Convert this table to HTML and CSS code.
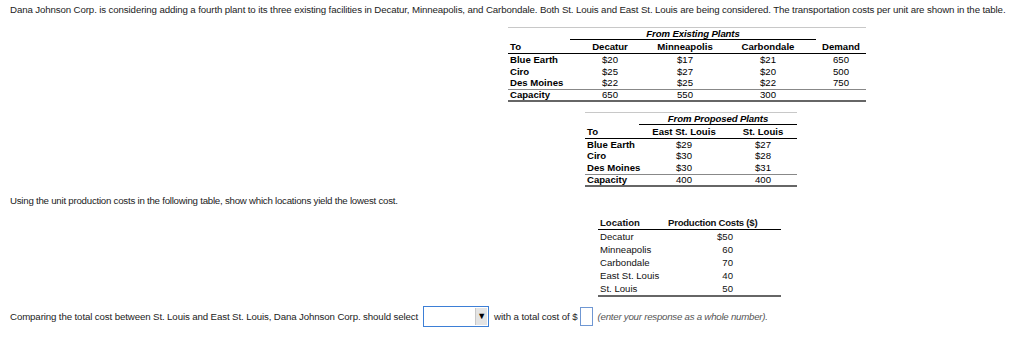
FILE: index.html
```html
<!DOCTYPE html>
<html>
<head>
<meta charset="utf-8">
<link rel="stylesheet" href="styles.css">
</head>
<body>
<p class="intro">Dana Johnson Corp. is considering adding a fourth plant to its three existing facilities in Decatur, Minneapolis, and Carbondale. Both St. Louis and East St. Louis are being considered. The transportation costs per unit are shown in the table.</p>

<table class="tbl t1">
  <colgroup><col class="c1a"><col class="c1b"><col class="c1c"><col class="c1d"><col class="c1e"></colgroup>
  <tr class="title"><td></td><td colspan="3" class="ul">From Existing Plants</td><td></td></tr>
  <tr class="head"><td class="lbl">To</td><td>Decatur</td><td>Minneapolis</td><td>Carbondale</td><td>Demand</td></tr>
  <tr class="data"><td class="lbl">Blue Earth</td><td>$20</td><td>$17</td><td>$21</td><td>650</td></tr>
  <tr class="data"><td class="lbl">Ciro</td><td>$25</td><td>$27</td><td>$20</td><td>500</td></tr>
  <tr class="data"><td class="lbl">Des Moines</td><td>$22</td><td>$25</td><td>$22</td><td>750</td></tr>
  <tr class="cap"><td class="lbl">Capacity</td><td>650</td><td>550</td><td>300</td><td></td></tr>
</table>

<table class="tbl t2">
  <colgroup><col class="c2a"><col class="c2b"><col class="c2c"></colgroup>
  <tr class="title"><td></td><td colspan="2" class="ul">From Proposed Plants</td></tr>
  <tr class="head"><td class="lbl">To</td><td>East St. Louis</td><td>St. Louis</td></tr>
  <tr class="data"><td class="lbl">Blue Earth</td><td>$29</td><td>$27</td></tr>
  <tr class="data"><td class="lbl">Ciro</td><td>$30</td><td>$28</td></tr>
  <tr class="data"><td class="lbl">Des Moines</td><td>$30</td><td>$31</td></tr>
  <tr class="cap"><td class="lbl">Capacity</td><td>400</td><td>400</td></tr>
</table>

<p class="using">Using the unit production costs in the following table, show which locations yield the lowest cost.</p>

<table class="t3">
  <colgroup><col class="c3a"><col class="c3b"></colgroup>
  <tr class="head3"><td>Location</td><td class="pc">Production Costs ($)</td></tr>
  <tr><td>Decatur</td><td class="num">$50</td></tr>
  <tr><td>Minneapolis</td><td class="num">60</td></tr>
  <tr><td>Carbondale</td><td class="num">70</td></tr>
  <tr><td>East St. Louis</td><td class="num">40</td></tr>
  <tr class="last"><td>St. Louis</td><td class="num">50</td></tr>
</table>

<div class="final">
  <span>Comparing the total cost between St. Louis and East St. Louis, Dana Johnson Corp. should select</span>
  <span class="select"><span class="arrow">&#9660;</span></span>
  <span class="cost">with a total cost of $</span><span class="input"></span>
  <span class="hint">(enter your response as a whole number).</span>
</div>
</body>
</html>
```

FILE: styles.css
```css
html, body {
  margin: 0;
  padding: 0;
  background: #fff;
}
body {
  font-family: "Liberation Sans", Arial, sans-serif;
  font-size: 9.7px;
  letter-spacing: -0.12px;
  color: #222;
}
.intro {
  margin: 0;
  padding: 3px 0 0 10px;
  line-height: 14px;
  white-space: nowrap;
}
.tbl {
  border-collapse: collapse;
  table-layout: fixed;
  border-top: 1px solid #c8c8c8;
  border-bottom: 2px solid #666;
  font-size: 9.6px;
  letter-spacing: 0;
  color: #000;
}
.tbl td {
  padding: 0;
  text-align: center;
  white-space: nowrap;
}
.tbl td.lbl {
  text-align: left;
  padding-left: 2px;
  font-weight: bold;
}
.tbl .title td {
  height: 11px;
  line-height: 11px;
  font-weight: bold;
  font-style: italic;
  letter-spacing: -0.1px;
}
.tbl .title td.ul {
  border-bottom: 1px solid #000;
}
.tbl .head td {
  height: 13px;
  line-height: 13px;
  font-weight: bold;
  border-bottom: 1px solid #000;
}
.tbl .data td {
  height: 11.6px;
  line-height: 11.6px;
}
.tbl .cap td {
  height: 10px;
  line-height: 10px;
  border-top: 1px solid #888;
}
.t1 {
  margin: 10px 0 0 508px;
  width: 358px;
}
.c1a { width: 62px; }
.c1b { width: 80px; }
.c1c { width: 70px; }
.c1d { width: 96px; }
.c1e { width: 50px; }

.t2 {
  margin: 10px 0 0 585px;
  width: 212px;
}
.c2a { width: 54px; }
.c2b { width: 90px; }
.c2c { width: 68px; }

.using {
  margin: 7px 0 0 0;
  padding-left: 10px;
  line-height: 14px;
  letter-spacing: -0.24px;
}

.t3 {
  margin: 9px 0 0 598px;
  width: 183px;
  border-collapse: collapse;
  table-layout: fixed;
  font-size: 9.6px;
  letter-spacing: 0;
  color: #111;
  border-bottom: 2px solid #666;
}
.c3a { width: 67px; }
.c3b { width: 116px; }
.t3 td {
  padding: 0 0 0 2px;
  height: 13px;
  line-height: 13px;
  white-space: nowrap;
}
.t3 .head3 td {
  height: 12px;
  line-height: 12px;
  font-weight: bold;
  border-bottom: 1px solid #000;
}
.t3 td.pc {
  padding-left: 3px;
  letter-spacing: -0.25px;
}
.t3 td.num {
  text-align: right;
  padding-right: 48px;
}

.final {
  display: flex;
  align-items: center;
  margin-top: 9px;
  padding-left: 10px;
  height: 21px;
  white-space: nowrap;
}
.select {
  display: flex;
  justify-content: flex-end;
  align-items: center;
  box-sizing: border-box;
  width: 66px;
  height: 21px;
  margin-left: 5px;
  margin-right: 5px;
  border: 1px solid #3d7fd6;
  background: #fff;
  padding-right: 1px;
}
.arrow {
  display: flex;
  align-items: center;
  justify-content: center;
  width: 11px;
  height: 17px;
  background: #e4e4e4;
  border-left: 1px solid #c8c8c8;
  font-size: 9px;
  letter-spacing: 0;
  color: #000;
}
.cost {
  letter-spacing: -0.1px;
}
.input {
  box-sizing: border-box;
  width: 13px;
  height: 19px;
  border: 1px solid #6f97d3;
  background: #fff;
  margin-left: 2px;
  margin-right: 5px;
}
.hint {
  font-style: italic;
  color: #555;
  letter-spacing: -0.24px;
}
```
